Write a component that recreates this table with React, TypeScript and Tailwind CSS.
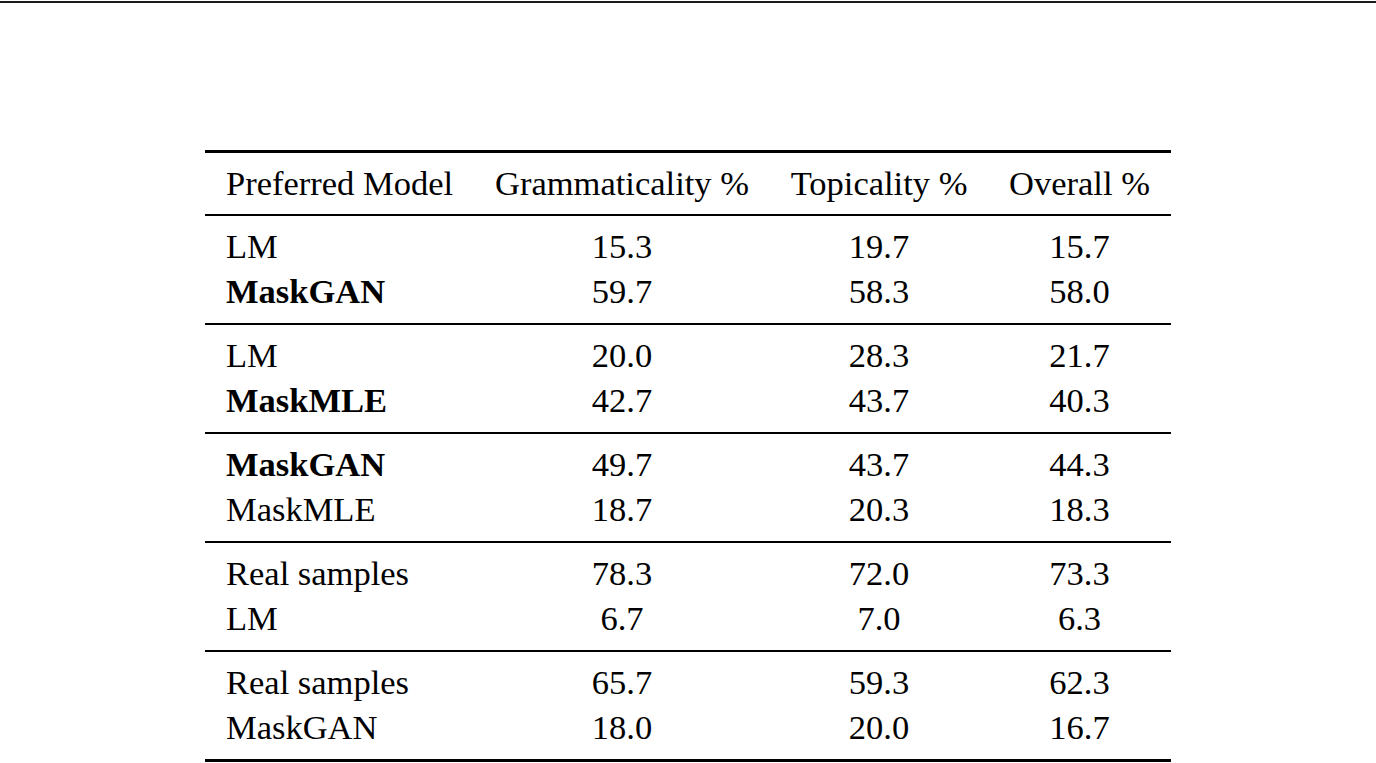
const GROUPS = [
  [
    { model: "LM", bold: false, values: ["15.3", "19.7", "15.7"] },
    { model: "MaskGAN", bold: true, values: ["59.7", "58.3", "58.0"] },
  ],
  [
    { model: "LM", bold: false, values: ["20.0", "28.3", "21.7"] },
    { model: "MaskMLE", bold: true, values: ["42.7", "43.7", "40.3"] },
  ],
  [
    { model: "MaskGAN", bold: true, values: ["49.7", "43.7", "44.3"] },
    { model: "MaskMLE", bold: false, values: ["18.7", "20.3", "18.3"] },
  ],
  [
    { model: "Real samples", bold: false, values: ["78.3", "72.0", "73.3"] },
    { model: "LM", bold: false, values: ["6.7", "7.0", "6.3"] },
  ],
  [
    { model: "Real samples", bold: false, values: ["65.7", "59.3", "62.3"] },
    { model: "MaskGAN", bold: false, values: ["18.0", "20.0", "16.7"] },
  ],
];

function Row({
  cells,
  bold,
  className,
}: {
  cells: string[];
  bold?: boolean;
  className?: string;
}) {
  return (
    <div className={`flex h-[45px] items-center leading-[45px] ${className ?? ""}`}>
      <div className={`w-[269px] pl-[21px] whitespace-nowrap ${bold ? "font-bold" : ""}`}>
        {cells[0]}
      </div>
      <div className="w-[296px] text-center whitespace-nowrap">{cells[1]}</div>
      <div className="w-[218px] text-center whitespace-nowrap">{cells[2]}</div>
      <div className="w-[183px] text-center whitespace-nowrap">{cells[3]}</div>
    </div>
  );
}

export default function App() {
  return (
    <div className="w-[1376px] h-[763px] bg-white text-black overflow-hidden font-['Liberation_Serif','Times_New_Roman',serif]">
      <div className="mt-px h-[2px] bg-[#1a1a1a]" />

      <div className="mx-auto mt-[147px] w-[966px] text-[34.5px]">
        <div className="border-t-[3px] border-b-[2px] border-black pt-2 pb-2">
          <Row
            cells={["Preferred Model", "Grammaticality %", "Topicality %", "Overall %"]}
          />
        </div>

        {GROUPS.map((group, i) => (
          <div
            key={i}
            className={`pt-2 pb-[9px] border-black ${
              i === GROUPS.length - 1 ? "border-b-[3px]" : "border-b-[2px]"
            }`}
          >
            {group.map((row, j) => (
              <Row key={j} cells={[row.model, ...row.values]} bold={row.bold} />
            ))}
          </div>
        ))}
      </div>
    </div>
  );
}
